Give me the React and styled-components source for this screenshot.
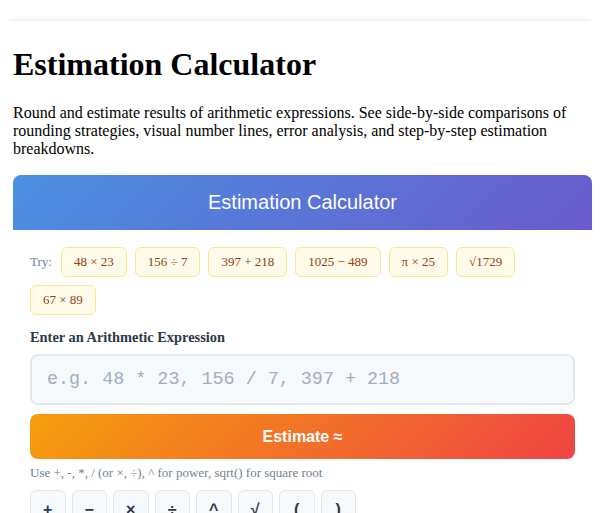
import React from 'react';
import styled, { createGlobalStyle } from 'styled-components';

const GlobalStyle = createGlobalStyle`
  body {
    margin: 8px;
    background: #ffffff;
    font-family: "Liberation Serif", "Times New Roman", serif;
  }
`;

const Card = styled.div`
  margin-top: 13px;
  padding: 4px 0 0 5px;
  background: #ffffff;
  box-shadow: 0 0 6px rgba(0, 0, 0, 0.12);
  overflow: hidden;
`;

const Title = styled.h1`
  font-size: 32px;
  margin: 21px 0;
  color: #000;
`;

const Intro = styled.p`
  font-size: 16px;
  margin: 21px 0 17px;
  color: #000;
`;

const Widget = styled.div`
  border-radius: 8px 8px 0 0;
  overflow: hidden;
`;

const Header = styled.div`
  padding: 16px;
  background: linear-gradient(135deg, #4a90e2 0%, #6a5acd 100%);
  color: #ffffff;
  text-align: center;
  font-family: "Liberation Sans", Arial, sans-serif;
  font-size: 20px;
`;

const Body = styled.div`
  padding: 17px 17px 0;
`;

const Examples = styled.div`
  display: flex;
  flex-wrap: wrap;
  align-items: center;
  gap: 8px;
  margin-bottom: 14px;
`;

const TryLabel = styled.span`
  font-size: 13px;
  color: #718096;
  margin-right: 1px;
`;

const Chip = styled.button`
  font-family: "Liberation Serif", "Times New Roman", serif;
  font-size: 13px;
  line-height: 16px;
  padding: 6px 12px;
  background: #fffbeb;
  border: 1px solid #fde68a;
  border-radius: 6px;
  color: #92400e;
  cursor: pointer;
`;

const Label = styled.label`
  display: block;
  font-size: 14.4px;
  font-weight: bold;
  color: #2d3748;
  margin-bottom: 8px;
`;

const Input = styled.input`
  display: block;
  width: 100%;
  box-sizing: border-box;
  height: 51px;
  padding: 0 15px;
  font-family: "Liberation Mono", "Courier New", monospace;
  font-size: 18.4px;
  background: #f7fafc;
  border: 2px solid #e2e8f0;
  border-radius: 8px;
  color: #2d3748;
  outline: none;

  &::placeholder {
    color: #a0aec0;
  }
`;

const EstimateButton = styled.button`
  display: block;
  width: 100%;
  height: 45px;
  margin-top: 9px;
  border: none;
  border-radius: 8px;
  background: linear-gradient(135deg, #f59e0b 0%, #ef4444 100%);
  color: #ffffff;
  font-family: "Liberation Sans", Arial, sans-serif;
  font-size: 16px;
  font-weight: bold;
  cursor: pointer;
`;

const Hint = styled.div`
  font-size: 13px;
  color: #718096;
  margin: 6px 0 9px;
`;

const Keypad = styled.div`
  display: flex;
  gap: 6px;
`;

const Key = styled.button`
  width: 35.5px;
  height: 40px;
  padding: 0;
  background: #f7fafc;
  border: 1px solid #e2e8f0;
  border-radius: 6px;
  color: #2d3748;
  font-family: "Liberation Sans", Arial, sans-serif;
  font-size: 16px;
  font-weight: bold;
  cursor: pointer;
`;

const examples = ['48 × 23', '156 ÷ 7', '397 + 218', '1025 − 489', 'π × 25', '√1729', '67 × 89'];
const keys = ['+', '−', '×', '÷', '^', '√', '(', ')'];

export default function App() {
  return (
    <>
      <GlobalStyle />
      <Card>
        <Title>Estimation Calculator</Title>
        <Intro>
          Round and estimate results of arithmetic expressions. See side-by-side comparisons of
          rounding strategies, visual number lines, error analysis, and step-by-step estimation
          breakdowns.
        </Intro>
        <Widget>
          <Header>Estimation Calculator</Header>
          <Body>
            <Examples>
              <TryLabel>Try:</TryLabel>
              {examples.map((ex) => (
                <Chip key={ex}>{ex}</Chip>
              ))}
            </Examples>
            <Label>Enter an Arithmetic Expression</Label>
            <Input placeholder="e.g. 48 * 23, 156 / 7, 397 + 218" />
            <EstimateButton>Estimate ≈</EstimateButton>
            <Hint>Use +, -, *, / (or ×, ÷), ^ for power, sqrt() for square root</Hint>
            <Keypad>
              {keys.map((k) => (
                <Key key={k}>{k}</Key>
              ))}
            </Keypad>
          </Body>
        </Widget>
      </Card>
    </>
  );
}
